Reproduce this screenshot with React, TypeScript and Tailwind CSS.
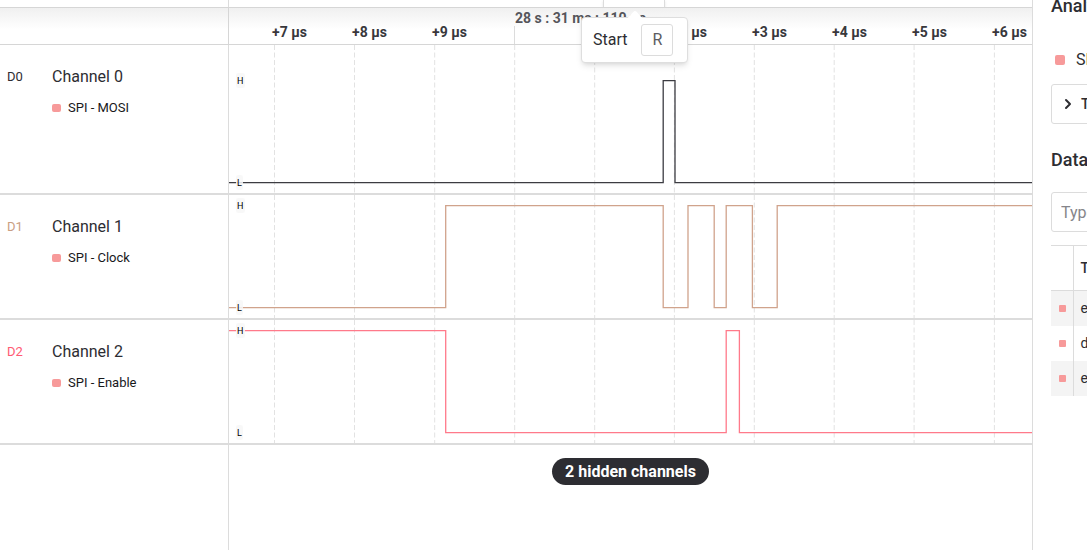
import { ChevronRight } from "lucide-react"

type Channel = {
  id: string
  name: string
  tag: string
  labelClass: string
  heightClass: string
  height: number
  high: number
  stroke: string
  path: string
}

const channels: Channel[] = [
  {
    id: "D0",
    name: "Channel 0",
    tag: "SPI - MOSI",
    labelClass: "text-[#2d2d32]",
    heightClass: "h-[150px]",
    height: 148,
    high: 35,
    stroke: "#3c3c42",
    path: "M0 137.7H434.2V35.7H446V137.7H4000",
  },
  {
    id: "D1",
    name: "Channel 1",
    tag: "SPI - Clock",
    labelClass: "text-[#c99e82]",
    heightClass: "h-[125px]",
    height: 123,
    high: 10,
    stroke: "#d0a38c",
    path: "M0 112.7H216.7V10.7H434.2V112.7H459V10.7H485.2V112.7H497.2V10.7H523.4V112.7H548.2V10.7H4000",
  },
  {
    id: "D2",
    name: "Channel 2",
    tag: "SPI - Enable",
    labelClass: "text-[#ff5a73]",
    heightClass: "h-[125px]",
    height: 123,
    high: 10,
    stroke: "#ff7a8a",
    path: "M0 10.7H216.7V112.7H497.2V10.7H510.4V112.7H4000",
  },
]

const gridLines = [45.5, 125.5, 205.7, 285.7, 365.7, 445.4, 525.3, 605.2, 685.1, 765.4]
const ticks = ["+7 µs", "+8 µs", "+9 µs", "", "", "+2 µs", "+3 µs", "+4 µs", "+5 µs", "+6 µs"]
const results = ["enable", "data", "enable"]

function LevelMark({ y, label }: { y: number; label: string }) {
  return (
    <g>
      <rect x="7" y={y - 7} width={label === "H" ? 9 : 7} height="15" rx="2" fill="#f7f7f7" fillOpacity="0.85" />
      <text x="8" y={y + 4} fontSize="9" fill="#000">
        {label}
      </text>
    </g>
  )
}

function ChannelRow({ channel }: { channel: Channel }) {
  return (
    <div className={`flex border-b-2 border-[#dcdcdc] ${channel.heightClass}`}>
      <div className="flex w-[229px] shrink-0 border-r border-[#dcdcdc] pt-5 pl-[7px]">
        <span className={`w-[45px] text-[13px] leading-6 ${channel.labelClass}`}>{channel.id}</span>
        <div>
          <div className="text-base leading-6">{channel.name}</div>
          <div className="mt-[9px] flex items-center gap-[7px] text-[13px] leading-5 text-[#18181b]">
            <span className="h-2 w-[9px] rounded-[2px] bg-[#f79a9a]" />
            {channel.tag}
          </div>
        </div>
      </div>
      <svg className="h-full min-w-0 flex-1" aria-hidden="true">
        {gridLines.map((x) => (
          <line key={x} x1={x} x2={x} y1="0" y2={channel.height} stroke="#e2e2e2" strokeDasharray="5 2.5" />
        ))}
        <path d={channel.path} fill="none" stroke={channel.stroke} strokeWidth="1.3" />
        <LevelMark y={channel.high} label="H" />
        <LevelMark y={channel.high + 102} label="L" />
      </svg>
    </div>
  )
}

function Ruler() {
  return (
    <div className="flex h-[38px] shrink-0 border-y border-[#d6d6d6] bg-linear-to-b from-[#f0f0f0] to-white to-60%">
      <div className="w-[229px] shrink-0 border-r border-[#d6d6d6]" />
      <div className="relative flex min-w-0 flex-1 overflow-hidden pl-[43px]">
        {ticks.map((tick, i) => (
          <span key={i} className="w-20 shrink-0 pt-4 text-sm leading-4 font-bold text-[#38383c]">
            {tick}
          </span>
        ))}
        <span className="absolute top-0 left-[286px] text-sm leading-5 font-bold whitespace-nowrap text-[#55555a]">
          28 s : 31 ms : 110 µs
        </span>
        <span className="absolute bottom-0 left-[285px] h-[18px] w-px bg-[#dcdcdc]" />
      </div>
    </div>
  )
}

function StartTooltip() {
  return (
    <div
      role="tooltip"
      className="absolute top-[17px] left-[581px] flex h-[46px] items-center gap-[14px] rounded border border-[#dedede] bg-white pr-[14px] pl-[11px] shadow-md"
    >
      <svg className="absolute -top-2 left-[43px]" width="20" height="9" aria-hidden="true">
        <path d="M1 9 C4 8 8 1 10 1 C12 1 16 8 19 9Z" fill="#fff" />
      </svg>
      <span className="text-base">Start</span>
      <kbd className="flex h-8 w-8 items-center justify-center rounded-[3px] border border-[#dcdcdc] font-[Roboto,sans-serif] text-base text-[#5c5c62]">
        R
      </kbd>
    </div>
  )
}

function AnalyzerPanel() {
  return (
    <aside className="w-[55px] shrink-0 overflow-hidden border-l border-[#dcdcdc]">
      <div className="w-[340px] pl-[18px]">
        <h2 className="-mt-2 text-lg leading-7 font-medium">Analyzers</h2>
        <div className="mt-7 flex h-6 items-center gap-[11px] pl-1 text-base">
          <span className="size-[10px] rounded-[2px] bg-[#f79a9a]" />
          SPI
        </div>
        <button
          type="button"
          className="mt-3 flex h-10 w-full items-center gap-[5px] rounded-[3px] border border-[#dcdcdc] pl-2 text-sm font-medium"
        >
          <ChevronRight size={16} strokeWidth={3} aria-hidden="true" />
          Trigger View
        </button>
        <h2 className="mt-[22px] text-lg leading-7 font-medium">Data</h2>
        <input
          type="text"
          aria-label="Search data"
          placeholder="Type to search"
          className="mt-[18px] h-10 w-full rounded-[3px] border border-[#dcdcdc] pl-[9px] text-base placeholder:text-[#85858a]"
        />
        <table className="mt-[13px] w-full table-fixed border-collapse text-left text-sm">
          <thead>
            <tr className="h-[45px] border-y border-[#dcdcdc]">
              <th className="w-[22px] border-r border-[#dcdcdc]" />
              <th className="pl-[7px] font-medium">Type</th>
            </tr>
          </thead>
          <tbody>
            {results.map((type, i) => (
              <tr key={i} className="h-[35px] odd:bg-[#f4f4f4]">
                <td className="border-r border-[#dcdcdc] pl-2">
                  <span className="block size-[7px] rounded-[1px] bg-[#f79a9a]" />
                </td>
                <td className="pl-[7px]">{type}</td>
              </tr>
            ))}
          </tbody>
        </table>
      </div>
    </aside>
  )
}

export default function App() {
  return (
    <div className="relative flex h-screen overflow-hidden bg-white font-[Roboto,sans-serif] text-[#2d2d32]">
      <main className="flex min-w-0 flex-1 flex-col">
        {/* Toolbar */}
        <div className="flex h-[7px] shrink-0">
          <div className="w-[229px] shrink-0 border-r border-[#dcdcdc]" />
          <div className="flex flex-1 justify-center">
            <button type="button" aria-label="Start" className="ml-1.5 w-[62px] border-x border-[#dcdcdc] shadow-sm" />
          </div>
        </div>
        <Ruler />
        {channels.map((channel) => (
          <ChannelRow key={channel.id} channel={channel} />
        ))}
        <div className="flex min-h-0 flex-1">
          <div className="w-[229px] shrink-0 border-r border-[#dcdcdc]" />
          <div className="flex flex-1 items-start justify-center pt-[13px]">
            <button type="button" className="h-[27px] rounded-full bg-[#2d2d32] px-[13px] text-base font-bold text-white">
              2 hidden channels
            </button>
          </div>
        </div>
      </main>
      <AnalyzerPanel />
      <StartTooltip />
    </div>
  )
}
